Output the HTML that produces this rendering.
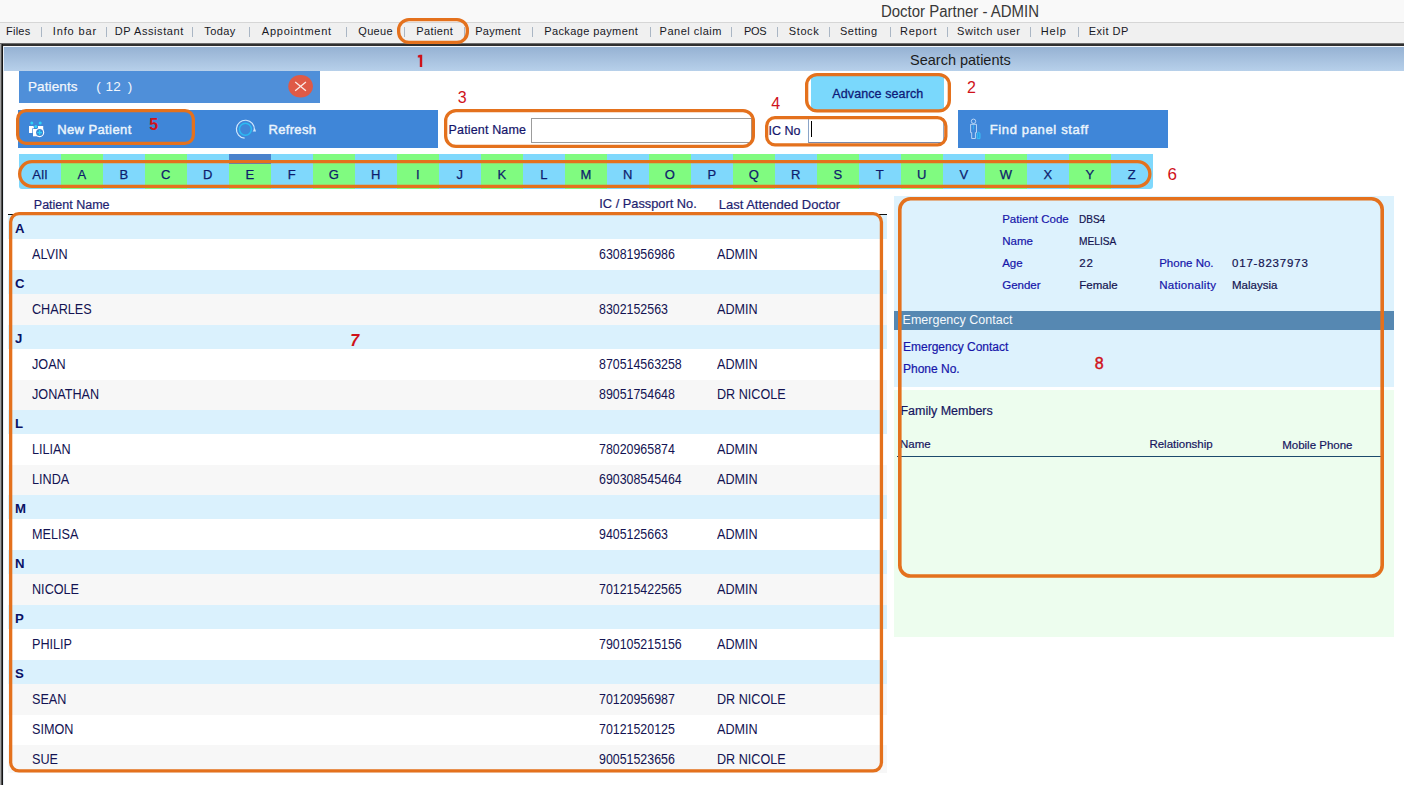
<!DOCTYPE html>
<html><head><meta charset="utf-8"><style>
html,body{margin:0;padding:0;}
body{width:1404px;height:785px;overflow:hidden;position:relative;background:#ffffff;font-family:"Liberation Sans",sans-serif;}
.t{position:absolute;white-space:nowrap;}
.b{position:absolute;box-sizing:content-box;}
svg.b{overflow:visible;}
</style></head><body>
<div class="b" style="left:0px;top:0px;width:1404px;height:22px;background:#f9f9f9"></div>
<div class="b" style="left:0px;top:22px;width:1404px;height:1px;background:#d6d6d6"></div>
<div class="t" style="left:880.50px;top:4.06px;font-size:16px;line-height:16px;color:#383838;font-weight:400;transform:scaleX(0.935);transform-origin:0 0;">Doctor Partner - ADMIN</div>
<div class="b" style="left:0px;top:23px;width:1404px;height:20px;background:#f0f0f0"></div>
<div class="t" style="left:6.00px;top:25.69px;font-size:11px;line-height:11px;color:#18181f;font-weight:400;letter-spacing:0.25px;">Files</div>
<div class="t" style="left:52.80px;top:25.69px;font-size:11px;line-height:11px;color:#18181f;font-weight:400;letter-spacing:0.85px;">Info bar</div>
<div class="t" style="left:114.80px;top:25.69px;font-size:11px;line-height:11px;color:#18181f;font-weight:400;letter-spacing:0.57px;">DP Assistant</div>
<div class="t" style="left:204.30px;top:25.69px;font-size:11px;line-height:11px;color:#18181f;font-weight:400;letter-spacing:0.42px;">Today</div>
<div class="t" style="left:261.80px;top:25.69px;font-size:11px;line-height:11px;color:#18181f;font-weight:400;letter-spacing:0.76px;">Appointment</div>
<div class="t" style="left:358.30px;top:25.69px;font-size:11px;line-height:11px;color:#18181f;font-weight:400;letter-spacing:0.32px;">Queue</div>
<div class="t" style="left:416.20px;top:25.69px;font-size:11px;line-height:11px;color:#18181f;font-weight:400;letter-spacing:0.4px;">Patient</div>
<div class="t" style="left:475.20px;top:25.69px;font-size:11px;line-height:11px;color:#18181f;font-weight:400;letter-spacing:0.32px;">Payment</div>
<div class="t" style="left:544.20px;top:25.69px;font-size:11px;line-height:11px;color:#18181f;font-weight:400;letter-spacing:0.39px;">Package payment</div>
<div class="t" style="left:659.60px;top:25.69px;font-size:11px;line-height:11px;color:#18181f;font-weight:400;letter-spacing:0.5px;">Panel claim</div>
<div class="t" style="left:744.00px;top:25.69px;font-size:11px;line-height:11px;color:#18181f;font-weight:400;letter-spacing:-0.3px;">POS</div>
<div class="t" style="left:788.80px;top:25.69px;font-size:11px;line-height:11px;color:#18181f;font-weight:400;letter-spacing:0.6px;">Stock</div>
<div class="t" style="left:840.00px;top:25.69px;font-size:11px;line-height:11px;color:#18181f;font-weight:400;letter-spacing:0.47px;">Setting</div>
<div class="t" style="left:900.10px;top:25.69px;font-size:11px;line-height:11px;color:#18181f;font-weight:400;letter-spacing:0.68px;">Report</div>
<div class="t" style="left:957.00px;top:25.69px;font-size:11px;line-height:11px;color:#18181f;font-weight:400;letter-spacing:0.61px;">Switch user</div>
<div class="t" style="left:1040.80px;top:25.69px;font-size:11px;line-height:11px;color:#18181f;font-weight:400;letter-spacing:0.85px;">Help</div>
<div class="t" style="left:1088.80px;top:25.69px;font-size:11px;line-height:11px;color:#18181f;font-weight:400;letter-spacing:0.47px;">Exit DP</div>
<div class="b" style="left:41px;top:27px;width:1px;height:10px;background:#aab6c4"></div>
<div class="b" style="left:106px;top:27px;width:1px;height:10px;background:#aab6c4"></div>
<div class="b" style="left:192px;top:27px;width:1px;height:10px;background:#aab6c4"></div>
<div class="b" style="left:249px;top:27px;width:1px;height:10px;background:#aab6c4"></div>
<div class="b" style="left:346px;top:27px;width:1px;height:10px;background:#aab6c4"></div>
<div class="b" style="left:404px;top:27px;width:1px;height:10px;background:#aab6c4"></div>
<div class="b" style="left:464px;top:27px;width:1px;height:10px;background:#aab6c4"></div>
<div class="b" style="left:532px;top:27px;width:1px;height:10px;background:#aab6c4"></div>
<div class="b" style="left:650px;top:27px;width:1px;height:10px;background:#aab6c4"></div>
<div class="b" style="left:731px;top:27px;width:1px;height:10px;background:#aab6c4"></div>
<div class="b" style="left:777px;top:27px;width:1px;height:10px;background:#aab6c4"></div>
<div class="b" style="left:829px;top:27px;width:1px;height:10px;background:#aab6c4"></div>
<div class="b" style="left:890px;top:27px;width:1px;height:10px;background:#aab6c4"></div>
<div class="b" style="left:947px;top:27px;width:1px;height:10px;background:#aab6c4"></div>
<div class="b" style="left:1030px;top:27px;width:1px;height:10px;background:#aab6c4"></div>
<div class="b" style="left:1078px;top:27px;width:1px;height:10px;background:#aab6c4"></div>
<div class="b" style="left:0px;top:43px;width:1404px;height:3px;background:linear-gradient(#8a8a8a,#1e1e1e 60%,#3a3a3a)"></div>
<div class="b" style="left:0px;top:46px;width:1404px;height:1px;background:#f4f8fc"></div>
<div class="b" style="left:0px;top:47px;width:1404px;height:24px;background:linear-gradient(#96b2d3,#b7d0ea)"></div>
<div class="t" style="left:910.00px;top:52.73px;font-size:14.5px;line-height:14.5px;color:#1c1c1c;font-weight:400;">Search patients</div>
<div class="b" style="left:0px;top:44px;width:1px;height:741px;background:#a2a2a2"></div>
<div class="b" style="left:1px;top:44px;width:1px;height:741px;background:#505050"></div>
<div class="b" style="left:2px;top:44px;width:1px;height:741px;background:#141414"></div>
<div class="b" style="left:3px;top:46px;width:1px;height:739px;background:#e8eef4"></div>
<div class="b" style="left:19px;top:71px;width:301px;height:32px;background:#4f8fd9"></div>
<div class="t" style="left:28.00px;top:79.87px;font-size:13.5px;line-height:13.5px;color:#f2f6fc;font-weight:400;letter-spacing:0.1px;-webkit-text-stroke:0.25px #f2f6fc;">Patients</div>
<div class="t" style="left:96.20px;top:79.97px;font-size:13.5px;line-height:13.5px;color:#f2f6fc;font-weight:400;">(</div>
<div class="t" style="left:105.60px;top:79.97px;font-size:13.5px;line-height:13.5px;color:#f2f6fc;font-weight:400;letter-spacing:0.2px;">12</div>
<div class="t" style="left:127.80px;top:79.97px;font-size:13.5px;line-height:13.5px;color:#f2f6fc;font-weight:400;">)</div>
<svg class="b" style="left:288px;top:74px" width="26" height="26" viewBox="0 0 26 26"><ellipse cx="12.6" cy="12.3" rx="12.3" ry="11.3" fill="#df5a46"/><path d="M7.2 7.9 L17.9 16.7 M17.9 7.9 L7.2 16.7" stroke="#fbeae6" stroke-width="1.3"/></svg>
<div class="b" style="left:18px;top:110px;width:420px;height:38px;background:#3f86d8"></div>
<div class="t" style="left:57.20px;top:122.80px;font-size:13px;line-height:13px;color:#eaf4fc;font-weight:400;letter-spacing:0.4px;-webkit-text-stroke:0.45px #eaf4fc;">New Patient</div>
<div class="t" style="left:268.60px;top:122.80px;font-size:13px;line-height:13px;color:#eaf4fc;font-weight:400;letter-spacing:0.3px;-webkit-text-stroke:0.45px #eaf4fc;">Refresh</div>
<svg class="b" style="left:24px;top:116px" width="26" height="26" viewBox="0 0 26 26"><circle cx="7.8" cy="7.1" r="1.5" fill="#2fd2f8"/><circle cx="16.2" cy="7.1" r="1.5" fill="#2fd2f8"/><rect x="5" y="10" width="5" height="7" fill="#ffffff"/><rect x="14" y="10" width="5.2" height="6" fill="#ffffff"/><rect x="8.3" y="12.3" width="8.4" height="9" fill="#3f86d8"/><rect x="9" y="13" width="7" height="7.3" fill="#ffffff"/><circle cx="11.8" cy="10.4" r="2.2" fill="#3f86d8"/><circle cx="11.8" cy="10.4" r="1.5" fill="#2fd2f8"/><circle cx="15.6" cy="16.6" r="4.6" fill="#ffffff"/><circle cx="15.6" cy="16.6" r="3.5" fill="#3a84d2"/><rect x="14.9" y="14.2" width="1.4" height="4.8" fill="#2fd2f8"/><rect x="13.2" y="15.9" width="4.8" height="1.4" fill="#2fd2f8"/></svg>
<svg class="b" style="left:234px;top:118px" width="24" height="24" viewBox="0 0 24 24"><circle cx="11.4" cy="11.2" r="6" fill="none" stroke="#2cbaf2" stroke-width="1.5"/><path d="M10.62 20.2 A9 9 0 1 1 20.37 12.0" fill="none" stroke="#d2e8fc" stroke-width="1.2"/><path d="M18.7 13.4 L22.1 13.4 L20.7 9.9 Z" fill="#d2e8fc"/></svg>
<div class="b" style="left:958px;top:110px;width:210px;height:38px;background:#3f86d8"></div>
<div class="t" style="left:989.70px;top:123.20px;font-size:13px;line-height:13px;color:#eaf4fc;font-weight:400;letter-spacing:0.65px;-webkit-text-stroke:0.45px #eaf4fc;">Find panel staff</div>
<svg class="b" style="left:967px;top:117px" width="16" height="24" viewBox="0 0 16 24"><circle cx="6.5" cy="4.3" r="2.2" fill="none" stroke="#c4dcf8" stroke-width="0.9"/><path d="M3.6 7.3 H9.5 V15.6 H8.4 V21.5 H4.7 V15.6 H3.6 Z" fill="none" stroke="#c4dcf8" stroke-width="0.9"/><path d="M6.4 8 V12.5" stroke="#36b8f0" stroke-width="0.9"/><path d="M10.2 21.6 V16.3 L11.6 15.2 L13 16.3 V21.6 Z" fill="#2a9fe8" stroke="#3cc4f8" stroke-width="0.9"/></svg>
<div class="b" style="left:811px;top:75.5px;width:133px;height:34px;background:#7ad8fc;border-radius:2px"></div>
<div class="t" style="left:832.30px;top:88.02px;font-size:12.5px;line-height:12.5px;color:#0e1a78;font-weight:400;letter-spacing:0.1px;-webkit-text-stroke:0.3px #0e1a78;">Advance search</div>
<div class="t" style="left:448.60px;top:124.22px;font-size:12.5px;line-height:12.5px;color:#14146a;font-weight:400;letter-spacing:0.15px;-webkit-text-stroke:0.2px #14146a;">Patient Name</div>
<div class="b" style="left:531px;top:118px;width:219px;height:23px;background:#fff;border:1px solid #9c9c9c"></div>
<div class="t" style="left:768.50px;top:124.92px;font-size:12.5px;line-height:12.5px;color:#14146a;font-weight:400;-webkit-text-stroke:0.2px #14146a;">IC No</div>
<div class="b" style="left:808px;top:118px;width:134px;height:23px;background:#fff;border:1px solid #98a8c0;border-left-color:#8aa4c8;border-bottom-color:#7a88a8"></div>
<div class="b" style="left:811px;top:121px;width:1px;height:16px;background:#000"></div>
<div class="b" style="left:19px;top:154px;width:42px;height:34.6px;background:#7fd8fc;border-bottom-left-radius:3px;"></div>
<div class="t" style="left:19px;top:168.00px;width:42px;text-align:center;font-size:13px;line-height:13px;color:#0e1c6c;-webkit-text-stroke:0.25px #0e1c6c;letter-spacing:0.4px">All</div>
<div class="b" style="left:61px;top:154px;width:42px;height:34.6px;background:#80fb80;"></div>
<div class="t" style="left:61px;top:168.00px;width:42px;text-align:center;font-size:13px;line-height:13px;color:#0e1c6c;-webkit-text-stroke:0.25px #0e1c6c;letter-spacing:0.4px">A</div>
<div class="b" style="left:103px;top:154px;width:42px;height:34.6px;background:#7fd8fc;"></div>
<div class="t" style="left:103px;top:168.00px;width:42px;text-align:center;font-size:13px;line-height:13px;color:#0e1c6c;-webkit-text-stroke:0.25px #0e1c6c;letter-spacing:0.4px">B</div>
<div class="b" style="left:145px;top:154px;width:42px;height:34.6px;background:#80fb80;"></div>
<div class="t" style="left:145px;top:168.00px;width:42px;text-align:center;font-size:13px;line-height:13px;color:#0e1c6c;-webkit-text-stroke:0.25px #0e1c6c;letter-spacing:0.4px">C</div>
<div class="b" style="left:187px;top:154px;width:42px;height:34.6px;background:#7fd8fc;"></div>
<div class="t" style="left:187px;top:168.00px;width:42px;text-align:center;font-size:13px;line-height:13px;color:#0e1c6c;-webkit-text-stroke:0.25px #0e1c6c;letter-spacing:0.4px">D</div>
<div class="b" style="left:229px;top:154px;width:42px;height:34.6px;background:#80fb80;"></div>
<div class="t" style="left:229px;top:168.00px;width:42px;text-align:center;font-size:13px;line-height:13px;color:#0e1c6c;-webkit-text-stroke:0.25px #0e1c6c;letter-spacing:0.4px">E</div>
<div class="b" style="left:271px;top:154px;width:42px;height:34.6px;background:#7fd8fc;"></div>
<div class="t" style="left:271px;top:168.00px;width:42px;text-align:center;font-size:13px;line-height:13px;color:#0e1c6c;-webkit-text-stroke:0.25px #0e1c6c;letter-spacing:0.4px">F</div>
<div class="b" style="left:313px;top:154px;width:42px;height:34.6px;background:#80fb80;"></div>
<div class="t" style="left:313px;top:168.00px;width:42px;text-align:center;font-size:13px;line-height:13px;color:#0e1c6c;-webkit-text-stroke:0.25px #0e1c6c;letter-spacing:0.4px">G</div>
<div class="b" style="left:355px;top:154px;width:42px;height:34.6px;background:#7fd8fc;"></div>
<div class="t" style="left:355px;top:168.00px;width:42px;text-align:center;font-size:13px;line-height:13px;color:#0e1c6c;-webkit-text-stroke:0.25px #0e1c6c;letter-spacing:0.4px">H</div>
<div class="b" style="left:397px;top:154px;width:42px;height:34.6px;background:#80fb80;"></div>
<div class="t" style="left:397px;top:168.00px;width:42px;text-align:center;font-size:13px;line-height:13px;color:#0e1c6c;-webkit-text-stroke:0.25px #0e1c6c;letter-spacing:0.4px">I</div>
<div class="b" style="left:439px;top:154px;width:42px;height:34.6px;background:#7fd8fc;"></div>
<div class="t" style="left:439px;top:168.00px;width:42px;text-align:center;font-size:13px;line-height:13px;color:#0e1c6c;-webkit-text-stroke:0.25px #0e1c6c;letter-spacing:0.4px">J</div>
<div class="b" style="left:481px;top:154px;width:42px;height:34.6px;background:#80fb80;"></div>
<div class="t" style="left:481px;top:168.00px;width:42px;text-align:center;font-size:13px;line-height:13px;color:#0e1c6c;-webkit-text-stroke:0.25px #0e1c6c;letter-spacing:0.4px">K</div>
<div class="b" style="left:523px;top:154px;width:42px;height:34.6px;background:#7fd8fc;"></div>
<div class="t" style="left:523px;top:168.00px;width:42px;text-align:center;font-size:13px;line-height:13px;color:#0e1c6c;-webkit-text-stroke:0.25px #0e1c6c;letter-spacing:0.4px">L</div>
<div class="b" style="left:565px;top:154px;width:42px;height:34.6px;background:#80fb80;"></div>
<div class="t" style="left:565px;top:168.00px;width:42px;text-align:center;font-size:13px;line-height:13px;color:#0e1c6c;-webkit-text-stroke:0.25px #0e1c6c;letter-spacing:0.4px">M</div>
<div class="b" style="left:607px;top:154px;width:42px;height:34.6px;background:#7fd8fc;"></div>
<div class="t" style="left:607px;top:168.00px;width:42px;text-align:center;font-size:13px;line-height:13px;color:#0e1c6c;-webkit-text-stroke:0.25px #0e1c6c;letter-spacing:0.4px">N</div>
<div class="b" style="left:649px;top:154px;width:42px;height:34.6px;background:#80fb80;"></div>
<div class="t" style="left:649px;top:168.00px;width:42px;text-align:center;font-size:13px;line-height:13px;color:#0e1c6c;-webkit-text-stroke:0.25px #0e1c6c;letter-spacing:0.4px">O</div>
<div class="b" style="left:691px;top:154px;width:42px;height:34.6px;background:#7fd8fc;"></div>
<div class="t" style="left:691px;top:168.00px;width:42px;text-align:center;font-size:13px;line-height:13px;color:#0e1c6c;-webkit-text-stroke:0.25px #0e1c6c;letter-spacing:0.4px">P</div>
<div class="b" style="left:733px;top:154px;width:42px;height:34.6px;background:#80fb80;"></div>
<div class="t" style="left:733px;top:168.00px;width:42px;text-align:center;font-size:13px;line-height:13px;color:#0e1c6c;-webkit-text-stroke:0.25px #0e1c6c;letter-spacing:0.4px">Q</div>
<div class="b" style="left:775px;top:154px;width:42px;height:34.6px;background:#7fd8fc;"></div>
<div class="t" style="left:775px;top:168.00px;width:42px;text-align:center;font-size:13px;line-height:13px;color:#0e1c6c;-webkit-text-stroke:0.25px #0e1c6c;letter-spacing:0.4px">R</div>
<div class="b" style="left:817px;top:154px;width:42px;height:34.6px;background:#80fb80;"></div>
<div class="t" style="left:817px;top:168.00px;width:42px;text-align:center;font-size:13px;line-height:13px;color:#0e1c6c;-webkit-text-stroke:0.25px #0e1c6c;letter-spacing:0.4px">S</div>
<div class="b" style="left:859px;top:154px;width:42px;height:34.6px;background:#7fd8fc;"></div>
<div class="t" style="left:859px;top:168.00px;width:42px;text-align:center;font-size:13px;line-height:13px;color:#0e1c6c;-webkit-text-stroke:0.25px #0e1c6c;letter-spacing:0.4px">T</div>
<div class="b" style="left:901px;top:154px;width:42px;height:34.6px;background:#80fb80;"></div>
<div class="t" style="left:901px;top:168.00px;width:42px;text-align:center;font-size:13px;line-height:13px;color:#0e1c6c;-webkit-text-stroke:0.25px #0e1c6c;letter-spacing:0.4px">U</div>
<div class="b" style="left:943px;top:154px;width:42px;height:34.6px;background:#7fd8fc;"></div>
<div class="t" style="left:943px;top:168.00px;width:42px;text-align:center;font-size:13px;line-height:13px;color:#0e1c6c;-webkit-text-stroke:0.25px #0e1c6c;letter-spacing:0.4px">V</div>
<div class="b" style="left:985px;top:154px;width:42px;height:34.6px;background:#80fb80;"></div>
<div class="t" style="left:985px;top:168.00px;width:42px;text-align:center;font-size:13px;line-height:13px;color:#0e1c6c;-webkit-text-stroke:0.25px #0e1c6c;letter-spacing:0.4px">W</div>
<div class="b" style="left:1027px;top:154px;width:42px;height:34.6px;background:#7fd8fc;"></div>
<div class="t" style="left:1027px;top:168.00px;width:42px;text-align:center;font-size:13px;line-height:13px;color:#0e1c6c;-webkit-text-stroke:0.25px #0e1c6c;letter-spacing:0.4px">X</div>
<div class="b" style="left:1069px;top:154px;width:42px;height:34.6px;background:#80fb80;"></div>
<div class="t" style="left:1069px;top:168.00px;width:42px;text-align:center;font-size:13px;line-height:13px;color:#0e1c6c;-webkit-text-stroke:0.25px #0e1c6c;letter-spacing:0.4px">Y</div>
<div class="b" style="left:1111px;top:154px;width:42px;height:34.6px;background:#7fd8fc;border-bottom-right-radius:3px;"></div>
<div class="t" style="left:1111px;top:168.00px;width:42px;text-align:center;font-size:13px;line-height:13px;color:#0e1c6c;-webkit-text-stroke:0.25px #0e1c6c;letter-spacing:0.4px">Z</div>
<div class="b" style="left:229px;top:154px;width:42px;height:9.6px;background:#4a82cc"></div>
<div class="t" style="left:33.80px;top:199.42px;font-size:12.5px;line-height:12.5px;color:#1e1e70;font-weight:400;-webkit-text-stroke:0.2px #1e1e70;">Patient Name</div>
<div class="t" style="left:599.30px;top:198.26px;font-size:12.8px;line-height:12.8px;color:#1e1e70;font-weight:400;-webkit-text-stroke:0.2px #1e1e70;">IC / Passport No.</div>
<div class="t" style="left:718.70px;top:197.80px;font-size:13px;line-height:13px;color:#1e1e70;font-weight:400;-webkit-text-stroke:0.2px #1e1e70;">Last Attended Doctor</div>
<div class="b" style="left:8px;top:214px;width:879px;height:1px;background:#111"></div>
<div class="b" style="left:8px;top:215px;width:879px;height:24px;background:#daf1fd"></div>
<div class="t" style="left:15.10px;top:222.84px;font-size:12px;line-height:12px;color:#0a1266;font-weight:700;transform:scaleX(1.1);transform-origin:0 0;">A</div>
<div class="b" style="left:8px;top:239px;width:879px;height:31px;background:#ffffff"></div>
<div class="t" style="left:31.90px;top:246.85px;font-size:14px;line-height:14px;color:#131352;font-weight:400;transform:scaleX(0.902);transform-origin:0 0;">ALVIN</div>
<div class="t" style="left:598.90px;top:246.85px;font-size:14px;line-height:14px;color:#131352;font-weight:400;transform:scaleX(0.885);transform-origin:0 0;">63081956986</div>
<div class="t" style="left:717.30px;top:246.85px;font-size:14px;line-height:14px;color:#131352;font-weight:400;transform:scaleX(0.9);transform-origin:0 0;">ADMIN</div>
<div class="b" style="left:8px;top:270px;width:879px;height:24px;background:#daf1fd"></div>
<div class="t" style="left:15.10px;top:277.84px;font-size:12px;line-height:12px;color:#0a1266;font-weight:700;transform:scaleX(1.1);transform-origin:0 0;">C</div>
<div class="b" style="left:8px;top:294px;width:879px;height:31px;background:#f7f7f7"></div>
<div class="t" style="left:31.90px;top:301.85px;font-size:14px;line-height:14px;color:#131352;font-weight:400;transform:scaleX(0.902);transform-origin:0 0;">CHARLES</div>
<div class="t" style="left:598.90px;top:301.85px;font-size:14px;line-height:14px;color:#131352;font-weight:400;transform:scaleX(0.885);transform-origin:0 0;">8302152563</div>
<div class="t" style="left:717.30px;top:301.85px;font-size:14px;line-height:14px;color:#131352;font-weight:400;transform:scaleX(0.9);transform-origin:0 0;">ADMIN</div>
<div class="b" style="left:8px;top:325px;width:879px;height:24px;background:#daf1fd"></div>
<div class="t" style="left:15.10px;top:332.84px;font-size:12px;line-height:12px;color:#0a1266;font-weight:700;transform:scaleX(1.1);transform-origin:0 0;">J</div>
<div class="b" style="left:8px;top:349px;width:879px;height:31px;background:#ffffff"></div>
<div class="t" style="left:31.90px;top:356.85px;font-size:14px;line-height:14px;color:#131352;font-weight:400;transform:scaleX(0.902);transform-origin:0 0;">JOAN</div>
<div class="t" style="left:598.90px;top:356.85px;font-size:14px;line-height:14px;color:#131352;font-weight:400;transform:scaleX(0.885);transform-origin:0 0;">870514563258</div>
<div class="t" style="left:717.30px;top:356.85px;font-size:14px;line-height:14px;color:#131352;font-weight:400;transform:scaleX(0.9);transform-origin:0 0;">ADMIN</div>
<div class="b" style="left:8px;top:380px;width:879px;height:30px;background:#f7f7f7"></div>
<div class="t" style="left:31.90px;top:387.35px;font-size:14px;line-height:14px;color:#131352;font-weight:400;transform:scaleX(0.902);transform-origin:0 0;">JONATHAN</div>
<div class="t" style="left:598.90px;top:387.35px;font-size:14px;line-height:14px;color:#131352;font-weight:400;transform:scaleX(0.885);transform-origin:0 0;">89051754648</div>
<div class="t" style="left:717.30px;top:387.35px;font-size:14px;line-height:14px;color:#131352;font-weight:400;transform:scaleX(0.9);transform-origin:0 0;">DR NICOLE</div>
<div class="b" style="left:8px;top:410px;width:879px;height:24px;background:#daf1fd"></div>
<div class="t" style="left:15.10px;top:417.84px;font-size:12px;line-height:12px;color:#0a1266;font-weight:700;transform:scaleX(1.1);transform-origin:0 0;">L</div>
<div class="b" style="left:8px;top:434px;width:879px;height:31px;background:#ffffff"></div>
<div class="t" style="left:31.90px;top:441.85px;font-size:14px;line-height:14px;color:#131352;font-weight:400;transform:scaleX(0.902);transform-origin:0 0;">LILIAN</div>
<div class="t" style="left:598.90px;top:441.85px;font-size:14px;line-height:14px;color:#131352;font-weight:400;transform:scaleX(0.885);transform-origin:0 0;">78020965874</div>
<div class="t" style="left:717.30px;top:441.85px;font-size:14px;line-height:14px;color:#131352;font-weight:400;transform:scaleX(0.9);transform-origin:0 0;">ADMIN</div>
<div class="b" style="left:8px;top:465px;width:879px;height:30px;background:#f7f7f7"></div>
<div class="t" style="left:31.90px;top:472.35px;font-size:14px;line-height:14px;color:#131352;font-weight:400;transform:scaleX(0.902);transform-origin:0 0;">LINDA</div>
<div class="t" style="left:598.90px;top:472.35px;font-size:14px;line-height:14px;color:#131352;font-weight:400;transform:scaleX(0.885);transform-origin:0 0;">690308545464</div>
<div class="t" style="left:717.30px;top:472.35px;font-size:14px;line-height:14px;color:#131352;font-weight:400;transform:scaleX(0.9);transform-origin:0 0;">ADMIN</div>
<div class="b" style="left:8px;top:495px;width:879px;height:24px;background:#daf1fd"></div>
<div class="t" style="left:15.10px;top:502.84px;font-size:12px;line-height:12px;color:#0a1266;font-weight:700;transform:scaleX(1.1);transform-origin:0 0;">M</div>
<div class="b" style="left:8px;top:519px;width:879px;height:31px;background:#ffffff"></div>
<div class="t" style="left:31.90px;top:526.85px;font-size:14px;line-height:14px;color:#131352;font-weight:400;transform:scaleX(0.902);transform-origin:0 0;">MELISA</div>
<div class="t" style="left:598.90px;top:526.85px;font-size:14px;line-height:14px;color:#131352;font-weight:400;transform:scaleX(0.885);transform-origin:0 0;">9405125663</div>
<div class="t" style="left:717.30px;top:526.85px;font-size:14px;line-height:14px;color:#131352;font-weight:400;transform:scaleX(0.9);transform-origin:0 0;">ADMIN</div>
<div class="b" style="left:8px;top:550px;width:879px;height:24px;background:#daf1fd"></div>
<div class="t" style="left:15.10px;top:557.84px;font-size:12px;line-height:12px;color:#0a1266;font-weight:700;transform:scaleX(1.1);transform-origin:0 0;">N</div>
<div class="b" style="left:8px;top:574px;width:879px;height:31px;background:#f7f7f7"></div>
<div class="t" style="left:31.90px;top:581.85px;font-size:14px;line-height:14px;color:#131352;font-weight:400;transform:scaleX(0.902);transform-origin:0 0;">NICOLE</div>
<div class="t" style="left:598.90px;top:581.85px;font-size:14px;line-height:14px;color:#131352;font-weight:400;transform:scaleX(0.885);transform-origin:0 0;">701215422565</div>
<div class="t" style="left:717.30px;top:581.85px;font-size:14px;line-height:14px;color:#131352;font-weight:400;transform:scaleX(0.9);transform-origin:0 0;">ADMIN</div>
<div class="b" style="left:8px;top:605px;width:879px;height:24px;background:#daf1fd"></div>
<div class="t" style="left:15.10px;top:612.84px;font-size:12px;line-height:12px;color:#0a1266;font-weight:700;transform:scaleX(1.1);transform-origin:0 0;">P</div>
<div class="b" style="left:8px;top:629px;width:879px;height:31px;background:#ffffff"></div>
<div class="t" style="left:31.90px;top:636.85px;font-size:14px;line-height:14px;color:#131352;font-weight:400;transform:scaleX(0.902);transform-origin:0 0;">PHILIP</div>
<div class="t" style="left:598.90px;top:636.85px;font-size:14px;line-height:14px;color:#131352;font-weight:400;transform:scaleX(0.885);transform-origin:0 0;">790105215156</div>
<div class="t" style="left:717.30px;top:636.85px;font-size:14px;line-height:14px;color:#131352;font-weight:400;transform:scaleX(0.9);transform-origin:0 0;">ADMIN</div>
<div class="b" style="left:8px;top:660px;width:879px;height:24px;background:#daf1fd"></div>
<div class="t" style="left:15.10px;top:667.84px;font-size:12px;line-height:12px;color:#0a1266;font-weight:700;transform:scaleX(1.1);transform-origin:0 0;">S</div>
<div class="b" style="left:8px;top:684px;width:879px;height:31px;background:#f7f7f7"></div>
<div class="t" style="left:31.90px;top:691.85px;font-size:14px;line-height:14px;color:#131352;font-weight:400;transform:scaleX(0.902);transform-origin:0 0;">SEAN</div>
<div class="t" style="left:598.90px;top:691.85px;font-size:14px;line-height:14px;color:#131352;font-weight:400;transform:scaleX(0.885);transform-origin:0 0;">70120956987</div>
<div class="t" style="left:717.30px;top:691.85px;font-size:14px;line-height:14px;color:#131352;font-weight:400;transform:scaleX(0.9);transform-origin:0 0;">DR NICOLE</div>
<div class="b" style="left:8px;top:715px;width:879px;height:30px;background:#ffffff"></div>
<div class="t" style="left:31.90px;top:722.35px;font-size:14px;line-height:14px;color:#131352;font-weight:400;transform:scaleX(0.902);transform-origin:0 0;">SIMON</div>
<div class="t" style="left:598.90px;top:722.35px;font-size:14px;line-height:14px;color:#131352;font-weight:400;transform:scaleX(0.885);transform-origin:0 0;">70121520125</div>
<div class="t" style="left:717.30px;top:722.35px;font-size:14px;line-height:14px;color:#131352;font-weight:400;transform:scaleX(0.9);transform-origin:0 0;">ADMIN</div>
<div class="b" style="left:8px;top:745px;width:879px;height:28px;background:#f7f7f7"></div>
<div class="t" style="left:31.90px;top:752.35px;font-size:14px;line-height:14px;color:#131352;font-weight:400;transform:scaleX(0.902);transform-origin:0 0;">SUE</div>
<div class="t" style="left:598.90px;top:752.35px;font-size:14px;line-height:14px;color:#131352;font-weight:400;transform:scaleX(0.885);transform-origin:0 0;">90051523656</div>
<div class="t" style="left:717.30px;top:752.35px;font-size:14px;line-height:14px;color:#131352;font-weight:400;transform:scaleX(0.9);transform-origin:0 0;">DR NICOLE</div>
<div class="b" style="left:894px;top:196px;width:500px;height:191px;background:#ddf2fd"></div>
<div class="b" style="left:894px;top:311px;width:500px;height:19px;background:#5688b2"></div>
<div class="b" style="left:894px;top:390px;width:500px;height:247px;background:#edfdee"></div>
<div class="t" style="left:1002.20px;top:213.57px;font-size:11.5px;line-height:11.5px;color:#1616aa;font-weight:400;-webkit-text-stroke:0.2px #1616aa;">Patient Code</div>
<div class="t" style="left:1002.20px;top:236.07px;font-size:11.5px;line-height:11.5px;color:#1616aa;font-weight:400;-webkit-text-stroke:0.2px #1616aa;">Name</div>
<div class="t" style="left:1002.20px;top:257.87px;font-size:11.5px;line-height:11.5px;color:#1616aa;font-weight:400;-webkit-text-stroke:0.2px #1616aa;">Age</div>
<div class="t" style="left:1002.20px;top:280.07px;font-size:11.5px;line-height:11.5px;color:#1616aa;font-weight:400;-webkit-text-stroke:0.2px #1616aa;">Gender</div>
<div class="t" style="left:1079.30px;top:213.57px;font-size:11.5px;line-height:11.5px;color:#141450;font-weight:400;-webkit-text-stroke:0.2px #141450;transform:scaleX(0.87);transform-origin:0 0;">DBS4</div>
<div class="t" style="left:1079.30px;top:236.07px;font-size:11.5px;line-height:11.5px;color:#141450;font-weight:400;-webkit-text-stroke:0.2px #141450;transform:scaleX(0.885);transform-origin:0 0;">MELISA</div>
<div class="t" style="left:1079.30px;top:257.87px;font-size:11.5px;line-height:11.5px;color:#141450;font-weight:400;letter-spacing:0.8px;-webkit-text-stroke:0.2px #141450;">22</div>
<div class="t" style="left:1079.30px;top:280.07px;font-size:11.5px;line-height:11.5px;color:#141450;font-weight:400;-webkit-text-stroke:0.2px #141450;">Female</div>
<div class="t" style="left:1159.20px;top:257.87px;font-size:11.5px;line-height:11.5px;color:#1616aa;font-weight:400;-webkit-text-stroke:0.2px #1616aa;">Phone No.</div>
<div class="t" style="left:1159.20px;top:280.07px;font-size:11.5px;line-height:11.5px;color:#1616aa;font-weight:400;letter-spacing:0.3px;-webkit-text-stroke:0.2px #1616aa;">Nationality</div>
<div class="t" style="left:1232.00px;top:257.87px;font-size:11.5px;line-height:11.5px;color:#141450;font-weight:400;letter-spacing:0.8px;-webkit-text-stroke:0.2px #141450;">017-8237973</div>
<div class="t" style="left:1232.00px;top:280.07px;font-size:11.5px;line-height:11.5px;color:#141450;font-weight:400;-webkit-text-stroke:0.2px #141450;">Malaysia</div>
<div class="t" style="left:902.60px;top:314.22px;font-size:12.5px;line-height:12.5px;color:#f4f8fc;font-weight:400;">Emergency Contact</div>
<div class="t" style="left:903.00px;top:340.84px;font-size:12px;line-height:12px;color:#1616aa;font-weight:400;-webkit-text-stroke:0.2px #1616aa;">Emergency Contact</div>
<div class="t" style="left:903.00px;top:363.34px;font-size:12px;line-height:12px;color:#1616aa;font-weight:400;-webkit-text-stroke:0.2px #1616aa;">Phone No.</div>
<div class="t" style="left:900.40px;top:405.22px;font-size:12.5px;line-height:12.5px;color:#16165e;font-weight:400;-webkit-text-stroke:0.2px #16165e;">Family Members</div>
<div class="t" style="left:900.00px;top:439.27px;font-size:11.5px;line-height:11.5px;color:#16165e;font-weight:400;-webkit-text-stroke:0.2px #16165e;">Name</div>
<div class="t" style="left:1149.40px;top:438.77px;font-size:11.5px;line-height:11.5px;color:#16165e;font-weight:400;-webkit-text-stroke:0.2px #16165e;">Relationship</div>
<div class="t" style="left:1282.20px;top:440.27px;font-size:11.5px;line-height:11.5px;color:#16165e;font-weight:400;-webkit-text-stroke:0.2px #16165e;">Mobile Phone</div>
<div class="b" style="left:897px;top:456px;width:484px;height:1px;background:#1c4a6c"></div>
<svg class="b" style="left:397px;top:18px" width="72" height="26" viewBox="0 0 72 26"><rect x="1.65" y="1.65" width="68.7" height="22.7" rx="10.35" ry="10.35" fill="none" stroke="#e4711d" stroke-width="3.3"/></svg>
<svg class="b" style="left:805px;top:72.5px" width="146" height="39.5" viewBox="0 0 146 39.5"><rect x="1.65" y="1.65" width="142.7" height="36.2" rx="10.35" ry="10.35" fill="none" stroke="#e4711d" stroke-width="3.3"/></svg>
<svg class="b" style="left:444px;top:109px" width="311" height="39" viewBox="0 0 311 39"><rect x="1.65" y="1.65" width="307.7" height="35.7" rx="10.35" ry="10.35" fill="none" stroke="#e4711d" stroke-width="3.3"/></svg>
<svg class="b" style="left:765px;top:115.5px" width="182.5" height="30.5" viewBox="0 0 182.5 30.5"><rect x="1.65" y="1.65" width="179.2" height="27.2" rx="8.35" ry="8.35" fill="none" stroke="#e4711d" stroke-width="3.3"/></svg>
<svg class="b" style="left:16px;top:109px" width="179" height="36" viewBox="0 0 179 36"><rect x="1.65" y="1.65" width="175.7" height="32.7" rx="8.35" ry="8.35" fill="none" stroke="#e4711d" stroke-width="3.3"/></svg>
<svg class="b" style="left:17.5px;top:159.5px" width="1133.5" height="28.0" viewBox="0 0 1133.5 28.0"><rect x="1.65" y="1.65" width="1130.2" height="24.7" rx="12.35" ry="12.35" fill="none" stroke="#e4711d" stroke-width="3.3"/></svg>
<svg class="b" style="left:8.7px;top:212px" width="874.0999999999999" height="560.6" viewBox="0 0 874.0999999999999 560.6"><rect x="1.65" y="1.65" width="870.8" height="557.3000000000001" rx="8.35" ry="8.35" fill="none" stroke="#e4711d" stroke-width="3.3"/></svg>
<svg class="b" style="left:898px;top:197.4px" width="486" height="380.80000000000007" viewBox="0 0 486 380.80000000000007"><rect x="1.8" y="1.8" width="482.4" height="377.20000000000005" rx="10.7" ry="10.7" fill="none" stroke="#e4711d" stroke-width="3.6"/></svg>
<svg class="b" style="left:416px;top:53px" width="8" height="16" viewBox="0 0 8 16"><path d="M3.8 1.8 H6.2 V14.1 H3.8 V4.5 L1.8 4.6 V2.6 Z" fill="#cf121a"/></svg>
<div class="t" style="left:967.00px;top:80.06px;font-size:16px;line-height:16px;color:#cf121a;font-weight:400;">2</div>
<div class="t" style="left:457.80px;top:90.06px;font-size:16px;line-height:16px;color:#cf121a;font-weight:400;">3</div>
<div class="t" style="left:771.20px;top:96.46px;font-size:16px;line-height:16px;color:#cf121a;font-weight:400;">4</div>
<div class="t" style="left:149.20px;top:117.36px;font-size:16px;line-height:16px;color:#cf121a;font-weight:700;">5</div>
<div class="t" style="left:1167.40px;top:165.70px;font-size:17px;line-height:17px;color:#cf121a;font-weight:400;">6</div>
<div class="t" style="left:350.20px;top:333.26px;font-size:16px;line-height:16px;color:#cf121a;font-weight:700;font-style:italic;">7</div>
<div class="t" style="left:1094.70px;top:356.26px;font-size:16px;line-height:16px;color:#cf121a;font-weight:400;-webkit-text-stroke:0.45px #cf121a;">8</div>
</body></html>
